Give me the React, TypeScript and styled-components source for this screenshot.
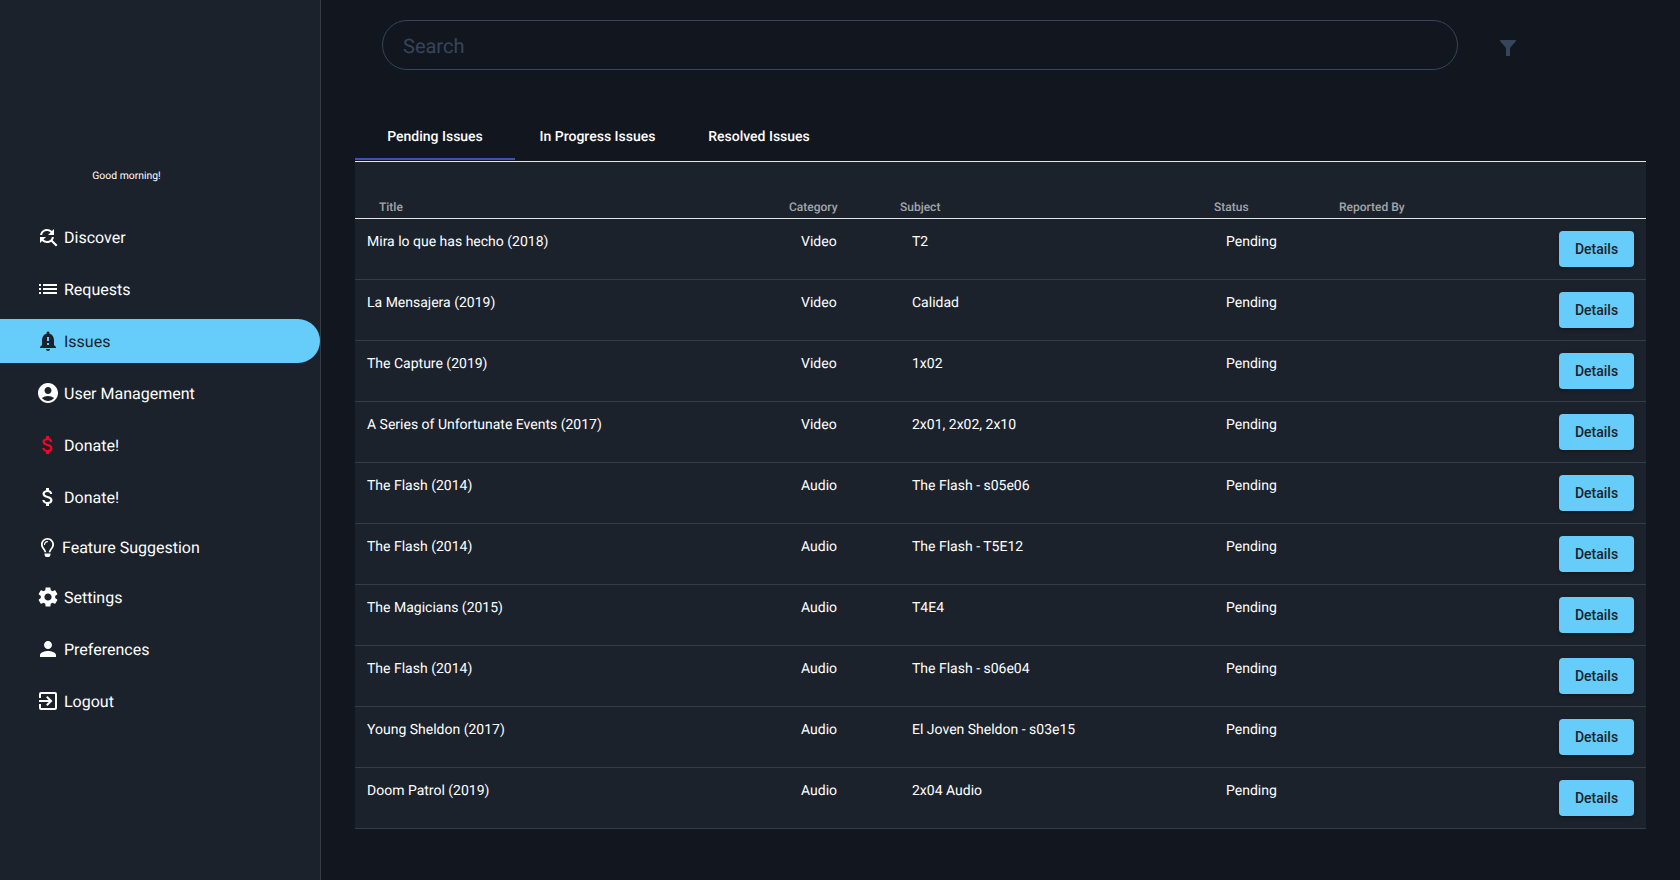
import React from 'react';
import styled, { createGlobalStyle } from 'styled-components';
import { MdFindReplace, MdList, MdNotificationImportant, MdAccountCircle, MdAttachMoney, MdSettings, MdPerson, MdExitToApp } from 'react-icons/md';
import { FaRegLightbulb } from 'react-icons/fa';

const Global = createGlobalStyle`
  html, body { margin: 0; padding: 0; height: 100%; overflow: hidden; background: #12161e; }
  body { font-family: Roboto, "Liberation Sans", sans-serif; color: #fff; text-rendering: geometricPrecision; }
  * { box-sizing: border-box; }
`;

const Shell = styled.div`
  display: flex;
  width: 1680px;
  height: 880px;
  overflow: hidden;
`;

const Sidebar = styled.aside`
  width: 321px;
  flex: none;
  height: 100%;
  background: #1b222c;
  border-right: 1px solid rgba(255, 255, 255, 0.12);
  display: flex;
  flex-direction: column;
`;

const Greeting = styled.div`
  margin-top: 169px;
  height: 14px;
  line-height: 14px;
  width: 253px;
  text-align: center;
  font-size: 10.4px;
  color: #fff;
`;

const Nav = styled.nav`
  margin-top: 32px;
  display: flex;
  flex-direction: column;
  gap: 8px;
`;

const NavItem = styled.a<{ $active?: boolean; $compact?: boolean }>`
  display: flex;
  align-items: center;
  height: ${(p) => (p.$compact ? 40 : 44)}px;
  width: 320px;
  padding-left: 36px;
  font-size: 16px;
  color: ${(p) => (p.$active ? '#1b222c' : '#fff')};
  background: ${(p) => (p.$active ? '#66ccf9' : 'transparent')};
  border-radius: ${(p) => (p.$active ? '0 22px 22px 0' : '0')};
`;

const IconBox = styled.span<{ $tint?: string; $narrow?: boolean }>`
  display: flex;
  align-items: center;
  justify-content: flex-start;
  width: ${(p) => (p.$narrow ? 26 : 28)}px;
  color: ${(p) => p.$tint ?? 'inherit'};
`;

const Bulb = styled(FaRegLightbulb)`
  margin-left: 2px;
`;

const Main = styled.main`
  flex: 1;
  min-width: 0;
  padding: 20px 34px 0 34px;
  display: flex;
  flex-direction: column;
`;

const SearchRow = styled.div`
  display: flex;
  align-items: center;
  height: 50px;
  padding-left: 27px;
`;

const SearchInput = styled.div`
  width: 1076px;
  height: 50px;
  border: 1px solid #35465c;
  border-radius: 25px;
  background: #12161e;
  padding: 2px 0 0 20px;
  display: flex;
  align-items: center;
  font-size: 20px;
  color: #35465c;
`;

const FilterIcon = styled.svg`
  width: 24px;
  height: 24px;
  fill: #35465c;
  margin: 6px 0 0 38px;
`;

const Tabs = styled.div`
  margin-top: 43px;
  display: flex;
  height: 48px;
  border-bottom: 1px solid #e6e6e6;
  box-sizing: content-box;
`;

const Tab = styled.div<{ $active?: boolean; $w: number }>`
  width: ${(p) => p.$w}px;
  height: 47px;
  display: flex;
  align-items: center;
  justify-content: center;
  font-size: 14px;
  font-weight: 500;
  padding-top: 3px;
  color: #fff;
  border-bottom: 2px solid ${(p) => (p.$active ? '#3f51b5' : 'transparent')};
`;

const Table = styled.div`
  background: #1b222c;
`;

const cols = '434px 111px 314px 125px 1fr 87px';

const HeadRow = styled.div`
  display: grid;
  grid-template-columns: ${cols};
  height: 57px;
  align-items: end;
  border-bottom: 1px solid #e6e6e6;
  padding-bottom: 4px;
`;

const HeadCell = styled.div<{ $first?: boolean }>`
  font-size: 12px;
  font-weight: 500;
  line-height: 14px;
  color: rgba(255, 255, 255, 0.6);
  padding-left: ${(p) => (p.$first ? 24 : 0)}px;
`;

const Row = styled.div`
  display: grid;
  grid-template-columns: ${cols};
  height: 61px;
  border-bottom: 1px solid rgba(255, 255, 255, 0.12);
`;

const Cell = styled.div`
  font-size: 14px;
  line-height: 20px;
  padding: 13px 0 0 12px;
  color: #fff;
`;

const ActionCell = styled.div`
  padding-top: 12px;
`;

const DetailsButton = styled.button`
  width: 75px;
  height: 36px;
  border: 0;
  border-radius: 4px;
  background: #66ccf9;
  color: #1b222c;
  font-family: inherit;
  font-size: 14px;
  font-weight: 500;
  padding: 0;
  box-shadow: 0 3px 1px -2px rgba(0,0,0,.2), 0 2px 2px 0 rgba(0,0,0,.14), 0 1px 5px 0 rgba(0,0,0,.12);
`;

const issues = [
  ['Mira lo que has hecho (2018)', 'Video', 'T2'],
  ['La Mensajera (2019)', 'Video', 'Calidad'],
  ['The Capture (2019)', 'Video', '1x02'],
  ['A Series of Unfortunate Events (2017)', 'Video', '2x01, 2x02, 2x10'],
  ['The Flash (2014)', 'Audio', 'The Flash - s05e06'],
  ['The Flash (2014)', 'Audio', 'The Flash - T5E12'],
  ['The Magicians (2015)', 'Audio', 'T4E4'],
  ['The Flash (2014)', 'Audio', 'The Flash - s06e04'],
  ['Young Sheldon (2017)', 'Audio', 'El Joven Sheldon - s03e15'],
  ['Doom Patrol (2019)', 'Audio', '2x04 Audio'],
];

export default function App() {
  return (
    <Shell>
      <Global />
      <Sidebar>
        <Greeting>Good morning!</Greeting>
        <Nav>
          <NavItem><IconBox><MdFindReplace size={24} /></IconBox>Discover</NavItem>
          <NavItem><IconBox><MdList size={24} /></IconBox>Requests</NavItem>
          <NavItem $active><IconBox><MdNotificationImportant size={24} /></IconBox>Issues</NavItem>
          <NavItem><IconBox><MdAccountCircle size={24} /></IconBox>User Management</NavItem>
          <NavItem><IconBox $tint="#ff0024"><MdAttachMoney size={24} /></IconBox>Donate!</NavItem>
          <NavItem><IconBox><MdAttachMoney size={24} /></IconBox>Donate!</NavItem>
          <NavItem $compact><IconBox $narrow><Bulb size={19} /></IconBox>Feature Suggestion</NavItem>
          <NavItem><IconBox><MdSettings size={24} /></IconBox>Settings</NavItem>
          <NavItem><IconBox><MdPerson size={24} /></IconBox>Preferences</NavItem>
          <NavItem><IconBox><MdExitToApp size={24} /></IconBox>Logout</NavItem>
        </Nav>
      </Sidebar>
      <Main>
        <SearchRow>
          <SearchInput>Search</SearchInput>
          <FilterIcon viewBox="0 0 24 24"><path d="M4 4h16v1l-6 7v8h-4v-8L4 5z" /></FilterIcon>
        </SearchRow>
        <Tabs>
          <Tab $active $w={160}>Pending Issues</Tab>
          <Tab $w={165}>In Progress Issues</Tab>
          <Tab $w={158}>Resolved Issues</Tab>
        </Tabs>
        <Table>
          <HeadRow>
            <HeadCell $first>Title</HeadCell>
            <HeadCell>Category</HeadCell>
            <HeadCell>Subject</HeadCell>
            <HeadCell>Status</HeadCell>
            <HeadCell>Reported By</HeadCell>
            <HeadCell />
          </HeadRow>
          {issues.map(([title, category, subject], i) => (
            <Row key={i}>
              <Cell>{title}</Cell>
              <Cell>{category}</Cell>
              <Cell>{subject}</Cell>
              <Cell>Pending</Cell>
              <Cell />
              <ActionCell><DetailsButton>Details</DetailsButton></ActionCell>
            </Row>
          ))}
        </Table>
      </Main>
    </Shell>
  );
}
